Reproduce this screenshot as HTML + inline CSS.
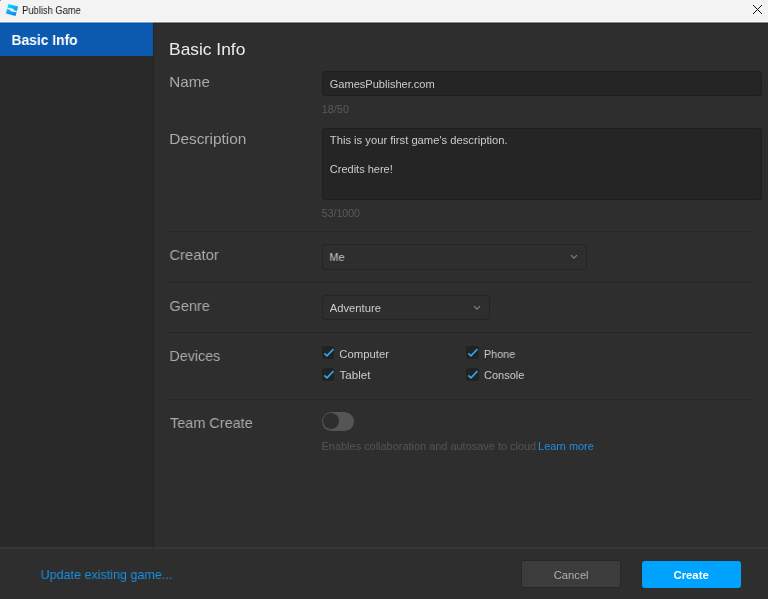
<!DOCTYPE html>
<html lang="en">
<head>
<meta charset="utf-8">
<title>Publish Game</title>
<style>
html,body{margin:0;padding:0;}
body{width:768px;height:599px;position:relative;overflow:hidden;background:#2e2e2e;font-family:"Liberation Sans",sans-serif;}
.abs{position:absolute;box-sizing:border-box;}
.t{will-change:transform;position:absolute;white-space:pre;line-height:1;transform-origin:0 0;display:block;}
#titlebar{left:0;top:0;width:768px;height:22px;background:#f3f3f3;border-bottom:1px solid #f9f9f9;}
#sidebar{left:0;top:22px;width:153px;height:526px;background:#292929;}
#vsep{left:153px;top:24px;width:1px;height:525px;background:#252525;}
#sel{left:0;top:22px;width:153px;height:34px;background:#0b5aaf;}
.box{background:#252525;border:1px solid #1f1f1f;border-radius:2.5px;}
.sel{background:#2e2e2e;border:1px solid #242424;border-radius:3px;}
.hr{left:169px;width:585px;height:1px;background:#262626;}
#fhr{left:0;top:547px;width:768px;height:2px;background:#373737;}
.cb{width:12.5px;height:12.5px;background:#222222;border-radius:2.5px;}
#cancel{left:521px;top:560px;width:100px;height:28px;background:#3c3c3c;border:1px solid #272727;border-radius:3px;}
#create{left:642px;top:561px;width:99px;height:27px;background:#00a2ff;border-radius:3px;}
#toggle{left:322px;top:412px;width:32px;height:19px;background:#555555;border-radius:10px;}
#knob{left:323.2px;top:413.2px;width:16px;height:16px;background:#2e2e2e;border-radius:8px;}
</style>
</head>
<body>
<div class="abs" id="titlebar"></div>
<div class="abs" id="sidebar"></div>
<div class="abs" style="left:0;top:0;width:1px;height:1px;background:#8c8c8c"></div>
<div class="abs" id="sel"></div>

<svg class="abs" style="left:5px;top:3px" width="14" height="14" viewBox="0 0 14 14">
 <defs><linearGradient id="g" x1="0" y1="0" x2="1" y2="1"><stop offset="0" stop-color="#00e8ff"/><stop offset="0.5" stop-color="#10a8f8"/><stop offset="1" stop-color="#0a84e6"/></linearGradient></defs>
 <g transform="rotate(15 7 7)">
  <rect x="2" y="2" width="10" height="10" fill="url(#g)"/>
  <rect x="5.5" y="5.5" width="3" height="3" fill="#f3f3f3"/>
  <rect x="2" y="5.7" width="4" height="1.6" fill="#f3f3f3"/>
  <rect x="8" y="6.7" width="4" height="1.6" fill="#f3f3f3"/>
 </g>
</svg>
<svg class="abs" style="left:752px;top:4px" width="11" height="11" viewBox="0 0 11 11"><path d="M1 1 L10 10 M10 1 L1 10" stroke="#111" stroke-width="1" fill="none"/></svg>

<div class="abs box" style="left:322px;top:71px;width:440px;height:25px"></div>
<div class="abs box" style="left:322px;top:128px;width:440px;height:72px"></div>
<div class="abs hr" style="top:231px"></div>
<div class="abs sel" style="left:322px;top:244px;width:265px;height:26px"></div>
<svg class="abs" style="left:570px;top:254px" width="8" height="6" viewBox="0 0 8 6"><path d="M1 1.2 L4 4.2 L7 1.2" stroke="#808080" stroke-width="1.2" fill="none"/></svg>
<div class="abs hr" style="top:282px"></div>
<div class="abs sel" style="left:322px;top:295px;width:168px;height:25px"></div>
<svg class="abs" style="left:473.2px;top:305px" width="8" height="6" viewBox="0 0 8 6"><path d="M1 1.2 L4 4.2 L7 1.2" stroke="#808080" stroke-width="1.2" fill="none"/></svg>
<div class="abs hr" style="top:332px"></div>

<div class="abs cb" style="left:321.9px;top:346.3px"></div>
<div class="abs cb" style="left:321.9px;top:368.4px"></div>
<div class="abs cb" style="left:466.4px;top:346.3px"></div>
<div class="abs cb" style="left:466.4px;top:368.4px"></div>
<svg class="abs" style="left:321.9px;top:346.3px" width="13" height="13" viewBox="0 0 13 13"><path d="M2.3 7.3 L5.0 9.9 L11.4 3.2" stroke="#2ba6ef" stroke-width="1.7" fill="none"/></svg>
<svg class="abs" style="left:321.9px;top:368.4px" width="13" height="13" viewBox="0 0 13 13"><path d="M2.3 7.3 L5.0 9.9 L11.4 3.2" stroke="#2ba6ef" stroke-width="1.7" fill="none"/></svg>
<svg class="abs" style="left:466.4px;top:346.3px" width="13" height="13" viewBox="0 0 13 13"><path d="M2.3 7.3 L5.0 9.9 L11.4 3.2" stroke="#2ba6ef" stroke-width="1.7" fill="none"/></svg>
<svg class="abs" style="left:466.4px;top:368.4px" width="13" height="13" viewBox="0 0 13 13"><path d="M2.3 7.3 L5.0 9.9 L11.4 3.2" stroke="#2ba6ef" stroke-width="1.7" fill="none"/></svg>

<div class="abs hr" style="top:399px"></div>
<div class="abs" id="toggle"></div>
<div class="abs" id="knob"></div>

<div class="abs" style="left:0;top:22px;width:153px;height:1px;background:#7ba3d3"></div>
<div class="abs" style="left:153px;top:22px;width:615px;height:1px;background:#8b8b8b"></div>
<div class="abs" style="left:0;top:23px;width:153px;height:1px;background:#0752ab"></div>
<div class="abs" style="left:153px;top:23px;width:615px;height:1px;background:#262626"></div>
<div class="abs" id="fhr"></div>
<div class="abs" id="vsep"></div>
<div class="abs" id="cancel"></div>
<div class="abs" id="create"></div>

<span class="t" style="left:22px;top:5px;font-size:10.5px;font-weight:400;color:#1a1a1a;transform:translateX(0.13px) scaleX(0.8908)">Publish Game</span>
<span class="t" style="left:11px;top:32px;font-size:15.5px;font-weight:700;color:#ffffff;transform:translateX(0.50px) scaleX(0.8927)">Basic Info</span>
<span class="t" style="left:169px;top:41px;font-size:17px;font-weight:400;color:#ececec;transform:translateX(0.03px) scaleX(1.0226)">Basic Info</span>
<span class="t" style="left:169px;top:74px;font-size:15px;font-weight:400;color:#aaaaaa;transform:translateX(0.34px) scaleX(1.0120)">Name</span>
<span class="t" style="left:169px;top:131px;font-size:15px;font-weight:400;color:#aaaaaa;transform:translateX(0.25px) scaleX(1.0274)">Description</span>
<span class="t" style="left:169px;top:247px;font-size:15px;font-weight:400;color:#aaaaaa;transform:translateX(0.47px) scaleX(0.9855)">Creator</span>
<span class="t" style="left:169px;top:298px;font-size:15px;font-weight:400;color:#aaaaaa;transform:translateX(0.45px) scaleX(0.9712)">Genre</span>
<span class="t" style="left:169px;top:348px;font-size:15px;font-weight:400;color:#aaaaaa;transform:translateX(0.42px) scaleX(0.9539)">Devices</span>
<span class="t" style="left:169px;top:415px;font-size:15px;font-weight:400;color:#aaaaaa;transform:translateX(0.98px) scaleX(0.9643)">Team Create</span>
<span class="t" style="left:329px;top:79px;font-size:11px;font-weight:400;color:#cccccc;transform:translateX(0.69px) scaleX(1.0047)">GamesPublisher.com</span>
<span class="t" style="left:321px;top:104px;font-size:10.5px;font-weight:400;color:#5a5a5a;transform:translateX(0.74px) scaleX(1.0350)">18/50</span>
<span class="t" style="left:329px;top:135px;font-size:11px;font-weight:400;color:#cccccc;transform:translateX(0.83px) scaleX(1.0186)">This is your first game&#39;s description.</span>
<span class="t" style="left:329px;top:164px;font-size:11px;font-weight:400;color:#cccccc;transform:translateX(0.78px) scaleX(1.0005)">Credits here!</span>
<span class="t" style="left:321px;top:208px;font-size:10.5px;font-weight:400;color:#5a5a5a;transform:translateX(0.75px) scaleX(1.0068)">53/1000</span>
<span class="t" style="left:329px;top:252px;font-size:11px;font-weight:400;color:#cccccc;transform:translateX(0.40px) scaleX(0.9910)">Me</span>
<span class="t" style="left:329px;top:303px;font-size:11px;font-weight:400;color:#cccccc;transform:translateX(0.71px) scaleX(1.0227)">Adventure</span>
<span class="t" style="left:339px;top:349px;font-size:11px;font-weight:400;color:#cccccc;transform:translateX(0.35px) scaleX(1.0291)">Computer</span>
<span class="t" style="left:339px;top:370px;font-size:11px;font-weight:400;color:#cccccc;transform:translateX(0.49px) scaleX(1.0568)">Tablet</span>
<span class="t" style="left:483px;top:349px;font-size:11px;font-weight:400;color:#cccccc;transform:translateX(0.86px) scaleX(0.9860)">Phone</span>
<span class="t" style="left:484px;top:370px;font-size:11px;font-weight:400;color:#cccccc;transform:translateX(0.03px) scaleX(0.9989)">Console</span>
<span class="t" style="left:321px;top:441px;font-size:10.5px;font-weight:400;color:#555555;transform:translateX(0.58px) scaleX(1.0414)">Enables collaboration and autosave to cloud</span>
<span class="t" style="left:538px;top:441px;font-size:10.5px;font-weight:400;color:#1e90dd;transform:translateX(0.08px) scaleX(1.0369)">Learn more</span>
<span class="t" style="left:40px;top:568px;font-size:13.5px;font-weight:400;color:#1791e0;transform:translateX(0.58px) scaleX(0.9287)">Update existing game...</span>
<span class="t" style="left:553px;top:570px;font-size:11px;font-weight:400;color:#b0b0b0;transform:translateX(0.68px) scaleX(1.0201)">Cancel</span>
<span class="t" style="left:673px;top:570px;font-size:11px;font-weight:700;color:#ffffff;transform:translateX(0.42px) scaleX(1.0334)">Create</span>
</body>
</html>
